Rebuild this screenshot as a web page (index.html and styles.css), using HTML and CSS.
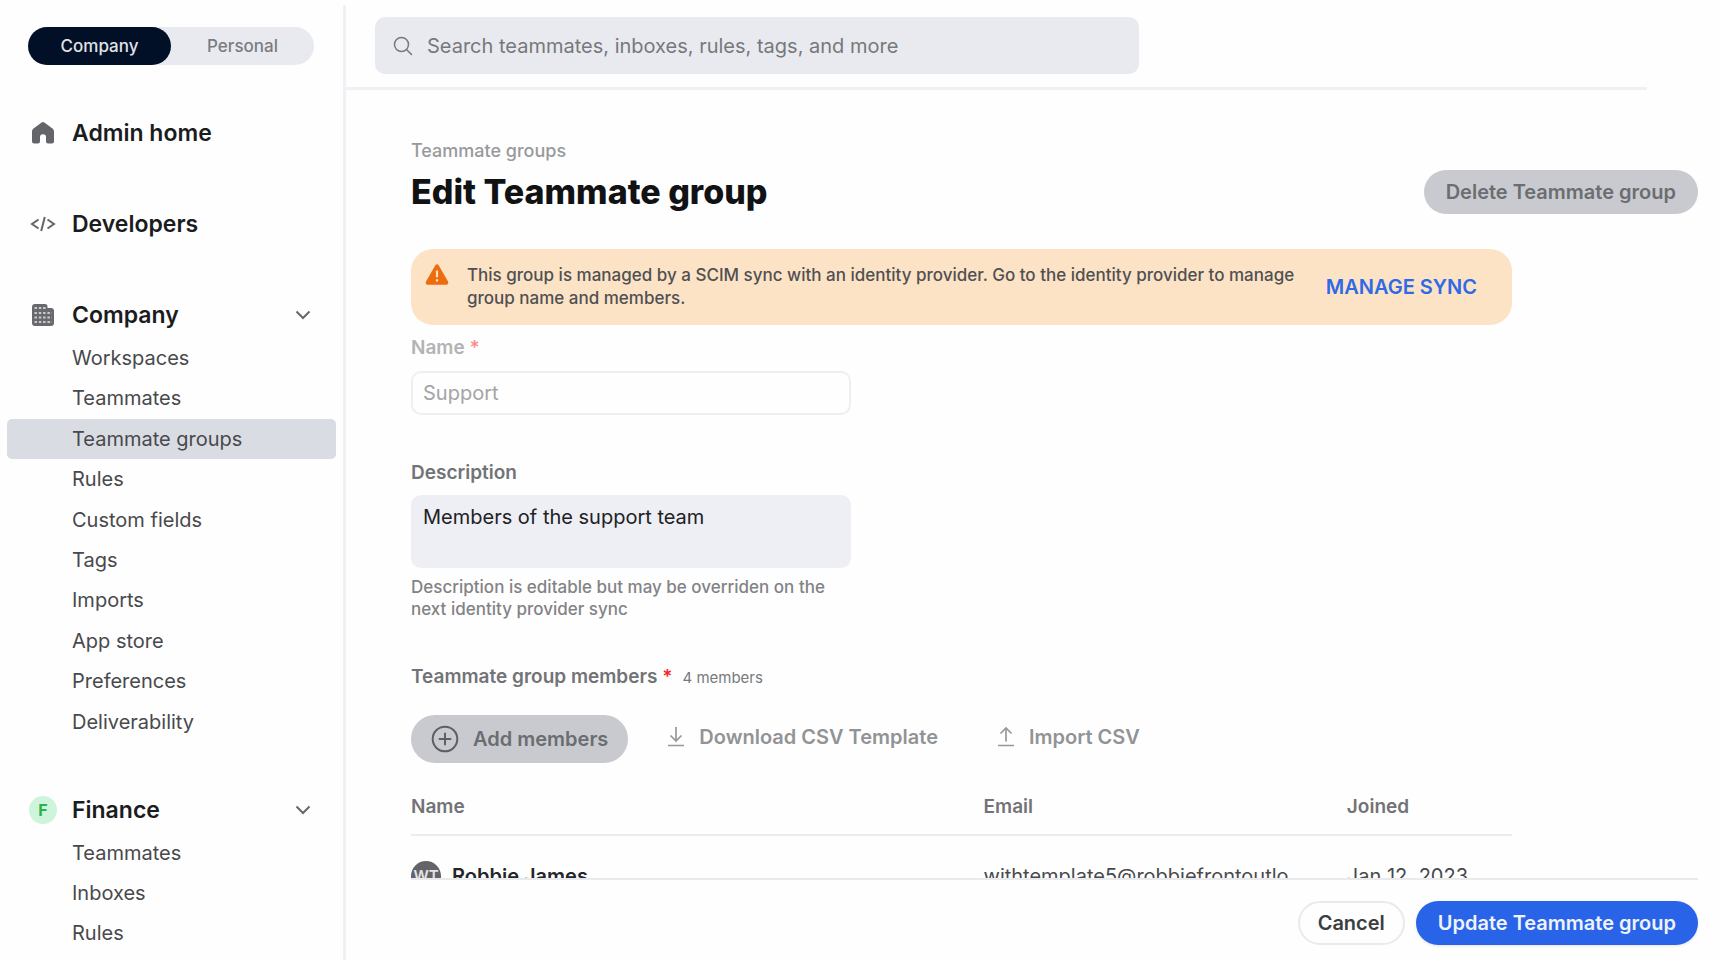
FILE: index.html
```html
<!DOCTYPE html>
<html lang="en">
<head>
<meta charset="utf-8">
<title>Edit Teammate group</title>
<link rel="stylesheet" href="styles.css">
</head>
<body class="app">
<aside class="sidebar">
  <div class="switch">
    <button class="switch-option switch-option-active" type="button">Company</button>
    <button class="switch-option" type="button">Personal</button>
  </div>
  <nav class="nav">
    <a class="nav-heading" href="#">
      <span class="nav-icon"><svg width="24" height="24" viewBox="0 0 24 24"><path fill="#636568" d="M10.300 1.700 2.200 7.700Q1 8.700 1 10.200V20.500Q1 22.500 3 22.500H7Q9 22.500 9 20.500V16Q9 13.200 12 13.200T15 16V20.500Q15 22.500 17 22.500H21Q23 22.500 23 20.500V10.200Q23 8.700 21.800 7.700L13.700 1.700Q12 .4 10.300 1.700Z"/></svg></span>
      <span>Admin home</span>
    </a>
    <a class="nav-heading" href="#">
      <span class="nav-icon"><svg width="26" height="16" viewBox="0 0 26 16" fill="none" stroke="#636568" stroke-width="2"><path d="M8.500 3.500 2 8l6.500 4.500M17.500 3.500 24 8l-6.500 4.500M14.800 1 11.200 15"/></svg></span>
      <span>Developers</span>
    </a>
    <section class="nav-group">
      <button class="nav-heading" type="button">
        <span class="nav-icon"><svg width="24" height="24" viewBox="0 0 24 24"><path fill="#68696c" d="M4 1H14Q16.500 1 16.500 3.500V5H20Q23 5 23 8V20Q23 23 20 23H4Q1 23 1 20V4Q1 1 4 1Z"/><path stroke="#c9cacc" stroke-width="2" stroke-dasharray="2.500 1.800" d="M3.500 5H16M3.500 10H21M3.500 14.500H21M3.500 19H21"/></svg></span>
        <span>Company</span>
        <svg class="chevron" width="16" height="10" viewBox="0 0 16 10"><path d="M1.500 1.500 8 8l6.500-6.500"/></svg>
      </button>
      <ul class="nav-list nav-list-long">
        <li><a class="nav-link" href="#">Workspaces</a></li>
        <li><a class="nav-link" href="#">Teammates</a></li>
        <li><a class="nav-link nav-link-active" href="#">Teammate groups</a></li>
        <li><a class="nav-link" href="#">Rules</a></li>
        <li><a class="nav-link" href="#">Custom fields</a></li>
        <li><a class="nav-link" href="#">Tags</a></li>
        <li><a class="nav-link" href="#">Imports</a></li>
        <li><a class="nav-link" href="#">App store</a></li>
        <li><a class="nav-link" href="#">Preferences</a></li>
        <li><a class="nav-link" href="#">Deliverability</a></li>
      </ul>
    </section>
    <section class="nav-group">
      <button class="nav-heading" type="button">
        <span class="nav-icon"><span class="badge">F</span></span>
        <span>Finance</span>
        <svg class="chevron" width="16" height="10" viewBox="0 0 16 10"><path d="M1.500 1.500 8 8l6.500-6.500"/></svg>
      </button>
      <ul class="nav-list">
        <li><a class="nav-link" href="#">Teammates</a></li>
        <li><a class="nav-link" href="#">Inboxes</a></li>
        <li><a class="nav-link" href="#">Rules</a></li>
      </ul>
    </section>
  </nav>
</aside>
<div class="page">
  <header class="topbar">
    <label class="search">
      <svg width="20" height="20" viewBox="0 0 20 20" fill="none" stroke="#76787c" stroke-width="1.500" stroke-linecap="round"><circle cx="8.500" cy="8.500" r="7"/><path d="m13.500 13.500 5 5"/></svg>
      <input class="search-input" type="search" aria-label="Search" placeholder="Search teammates, inboxes, rules, tags, and more">
    </label>
  </header>
  <main class="content">
    <a class="breadcrumb" href="#">Teammate groups</a>
    <div class="title-row">
      <h1 class="title">Edit Teammate group</h1>
      <button class="button button-muted" type="button">Delete Teammate group</button>
    </div>
    <div class="column">
      <div class="banner">
        <svg class="banner-icon" width="24" height="21" viewBox="0 0 24 21"><path fill="#ed6c0e" d="M10.200 1.500Q12-.9 13.800 1.500L23 17.600Q24 20.500 21.400 20.800H2.600Q0 20.500 1 17.600Z"/><path fill="#fce3c6" d="M10.900 6.500H13.100V13.300H10.900ZM10.900 15.200H13.100V17.400H10.900Z"/></svg>
        <p class="banner-text">This group is managed by a SCIM sync with an identity provider. Go to the identity provider to manage group name and members.</p>
        <a class="banner-link" href="#">MANAGE SYNC</a>
      </div>
      <div class="field field-disabled">
        <label class="label" for="name">Name <span class="required">*</span></label>
        <input class="input" id="name" type="text" value="Support" disabled>
      </div>
      <div class="field field-description">
        <label class="label" for="description">Description</label>
        <textarea class="input textarea" id="description">Members of the support team</textarea>
        <p class="help">Description is editable but may be overriden on the next identity provider sync</p>
      </div>
      <div class="members-heading">
        <h2 class="label">Teammate group members <span class="required">*</span></h2>
        <span class="count">4 members</span>
      </div>
      <div class="actions">
        <button class="button button-muted button-add" type="button">
          <svg width="28" height="28" viewBox="0 0 28 28" fill="none" stroke="#5d5f63" stroke-width="2" stroke-linecap="round"><circle cx="14" cy="14" r="12.300"/><path d="M14 8.500v11M8.500 14h11"/></svg>
          Add members
        </button>
        <button class="text-button" type="button">
          <svg width="18" height="22" viewBox="0 0 18 22" fill="none" stroke="#97989b" stroke-width="1.700"><path d="M9 1v14M3.500 9.500 9 15l5.500-5.500M1 19.500h16"/></svg>
          Download CSV Template
        </button>
        <button class="text-button" type="button">
          <svg width="18" height="22" viewBox="0 0 18 22" fill="none" stroke="#97989b" stroke-width="1.700"><path d="M9 15.500V2M3.500 7.500 9 2l5.500 5.500M1 19.500h16"/></svg>
          Import CSV
        </button>
      </div>
      <table class="members">
        <thead>
          <tr><th class="col-name">Name</th><th class="col-email">Email</th><th>Joined</th></tr>
        </thead>
        <tbody>
          <tr>
            <td><div class="member"><span class="avatar">WT</span>Robbie James</div></td>
            <td>withtemplate5@robbiefrontoutlo</td>
            <td>Jan 12, 2023</td>
          </tr>
        </tbody>
      </table>
    </div>
  </main>
  <footer class="footer">
    <button class="button button-outline" type="button">Cancel</button>
    <button class="button button-primary" type="button">Update Teammate group</button>
  </footer>
</div>
</body>
</html>
```

FILE: styles.css
```css
* {
  box-sizing: border-box;
}

body,
h1,
h2,
p,
ul {
  margin: 0;
  padding: 0;
}

button,
input,
textarea {
  font: inherit;
  color: inherit;
}

button {
  border: 0;
  background: none;
  padding: 0;
  cursor: pointer;
}

a {
  color: inherit;
  text-decoration: none;
}

svg {
  display: block;
  flex-shrink: 0;
}

.app {
  display: flex;
  height: 100vh;
  overflow: hidden;
  background: #fefefe;
  color: #48494c;
  font-family: Inter, "Liberation Sans", sans-serif;
  font-size: 20px;
  line-height: 24px;
}

/* Sidebar */

.sidebar {
  flex: none;
  width: 346px;
  margin-top: 5px;
  padding: 22px 7px 0;
  border-right: 3px solid #f0f1f5;
  overflow: hidden;
}

.switch {
  display: flex;
  margin: 0 22px 48px 21px;
  border-radius: 19px;
  background: #e9eaef;
}

.switch-option {
  flex: 1;
  height: 38px;
  border-radius: 19px;
  color: #7b7c80;
  font-size: 17px;
  font-weight: 500;
}

.switch-option-active {
  background: #011027;
  color: #e0e3e8;
}

.nav {
  display: flex;
  flex-direction: column;
  gap: 51px;
}

.nav-group + .nav-group {
  margin-top: -3px;
}

.nav-heading {
  display: flex;
  align-items: center;
  width: 100%;
  height: 40px;
  padding: 0 25px 0 21px;
  color: #1b1c1e;
  font-size: 23px;
  font-weight: 600;
  text-align: left;
}

.nav-icon {
  display: flex;
  justify-content: center;
  width: 30px;
  margin-right: 14px;
}

.badge {
  width: 28px;
  height: 28px;
  border-radius: 50%;
  background: #cff4dc;
  color: #2cb24c;
  font-size: 16px;
  font-weight: 700;
  line-height: 28px;
  text-align: center;
}

.chevron {
  margin-left: auto;
  fill: none;
  stroke: #66686b;
  stroke-width: 2;
}

.nav-list {
  display: grid;
  margin-top: 3px;
  list-style: none;
}

.nav-list-long {
  min-height: 404px;
}

.nav-link {
  display: block;
  height: 40px;
  padding-left: 65px;
  border-radius: 5px;
  line-height: 40px;
}

.nav-link-active {
  background: #dadce4;
}

/* Page */

.page {
  display: flex;
  flex: 1;
  flex-direction: column;
  min-width: 0;
}

.topbar {
  flex: none;
  margin-right: 73px;
  padding: 17px 0 13px 29px;
  border-bottom: 3px solid #f0f1f5;
}

.search {
  display: flex;
  align-items: center;
  gap: 14px;
  max-width: 764px;
  height: 57px;
  padding: 0 18px;
  border-radius: 10px;
  background: #e9eaef;
}

.search-input {
  flex: 1;
  padding: 0;
  border: 0;
  outline: 0;
  background: none;
}

.search-input::placeholder {
  color: #76787c;
  opacity: 1;
}

.content {
  flex: 1;
  min-height: 0;
  padding: 50px 22px 0 65px;
  overflow: hidden;
}

.breadcrumb {
  display: block;
  color: #98999c;
  font-size: 18px;
  font-weight: 500;
  line-height: 22px;
}

.title-row {
  display: flex;
  align-items: center;
  justify-content: space-between;
  margin: 8px 0 35px;
}

.title {
  color: #111214;
  font-size: 34px;
  font-weight: 800;
  line-height: 44px;
}

.button {
  height: 44px;
  padding: 0 22px;
  border-radius: 25px;
  font-size: 20px;
  font-weight: 600;
  white-space: nowrap;
}

.button-muted {
  background: #c9cacf;
  color: #6b6d71;
}

.button-outline {
  padding: 0 18px;
  border: 2px solid #e9eaec;
  color: #3c3d40;
}

.button-primary {
  background: #2964e8;
  color: #eef3fe;
  box-shadow: 0 1px 3px #0000001a;
}

.column {
  max-width: 1101px;
}

.banner {
  display: flex;
  align-items: center;
  padding: 15px 35px 15px 14px;
  border-radius: 22px;
  background: #fce3c6;
}

.banner-icon {
  align-self: flex-start;
}

.banner-text {
  flex: 1;
  margin: 0 18px;
  color: #505052;
  font-size: 17px;
  font-weight: 500;
  line-height: 23px;
}

.banner-link {
  color: #2e6ae6;
  font-size: 20px;
  font-weight: 600;
}

.field {
  display: flex;
  flex-direction: column;
  max-width: 440px;
  margin-top: 12px;
}

.field-description {
  margin-top: 47px;
}

.label {
  color: #727377;
  font-size: 19px;
  font-weight: 600;
  line-height: 22px;
}

.required {
  color: #ee2b2b;
}

.field-disabled .label {
  color: #b2b3b6;
}

.field-disabled .required {
  color: #f59090;
}

.input {
  height: 44px;
  margin-top: 12px;
  padding: 0 10px;
  border: 2px solid #edeff0;
  border-radius: 10px;
  background: #fefefe;
}

.input:disabled {
  color: #a3a4a7;
}

.textarea {
  height: 73px;
  margin-top: 11px;
  padding: 8px 10px;
  border-color: #eeeff4;
  background: #eeeff4;
  color: #202124;
  resize: none;
}

.help {
  margin-top: 8px;
  color: #828386;
  font-size: 17px;
  font-weight: 500;
  line-height: 22px;
}

.members-heading {
  display: flex;
  align-items: baseline;
  gap: 10px;
  margin: 46px 0 26px;
}

.count {
  color: #77797c;
  font-size: 15px;
  line-height: 22px;
}

.actions {
  display: flex;
  align-items: center;
}

.button-add {
  display: flex;
  align-items: center;
  gap: 14px;
  height: 48px;
  padding: 0 20px;
}

.text-button {
  display: flex;
  align-items: center;
  gap: 14px;
  margin-left: 39px;
  padding-bottom: 4px;
  color: #929396;
  font-size: 20px;
  font-weight: 600;
}

.text-button + .text-button {
  margin-left: 59px;
}

.members {
  width: 100%;
  margin-top: 15px;
  border-collapse: collapse;
  table-layout: fixed;
}

.members th {
  padding: 18px 0 16px;
  border-bottom: 2px solid #ebecef;
  color: #727377;
  font-size: 19px;
  font-weight: 600;
  line-height: 22px;
  text-align: left;
}

.members td {
  padding: 25px 0;
  white-space: nowrap;
}

.col-name {
  width: 52%;
}

.col-email {
  width: 33%;
}

.member {
  display: flex;
  align-items: center;
  gap: 11px;
  color: #242528;
  font-weight: 600;
}

.avatar {
  width: 30px;
  height: 30px;
  border-radius: 50%;
  background: #636467;
  color: #e4e4e6;
  font-size: 15px;
  line-height: 30px;
  text-align: center;
}

.footer {
  display: flex;
  flex: none;
  justify-content: flex-end;
  gap: 11px;
  margin: 0 22px 0 65px;
  padding: 21px 0 15px;
  border-top: 2px solid #e9eaec;
}
```
